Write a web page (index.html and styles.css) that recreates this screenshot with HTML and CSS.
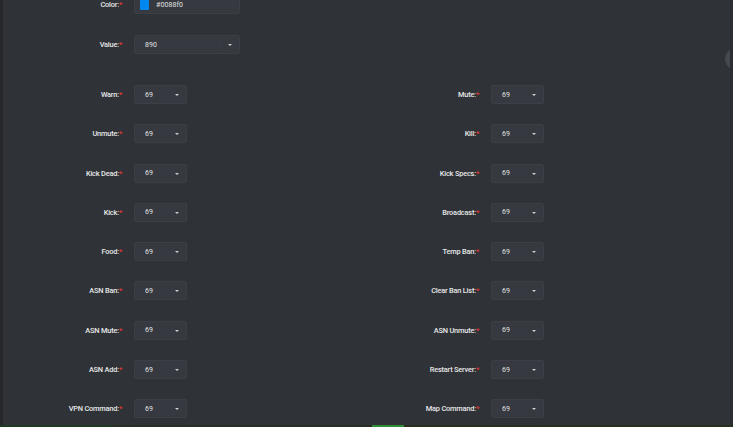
FILE: index.html
```html
<!DOCTYPE html>
<html>
<head>
<meta charset="utf-8">
<link rel="stylesheet" href="styles.css">
</head>
<body>
<div class="page">
  <div class="edge"></div>
  <div class="main">
    <div class="form">
      <div class="row row-color">
        <label class="label">Color:<span class="req">*</span></label>
        <div class="field wide"><span class="swatch"></span><span class="val">#0088f0</span></div>
      </div>
      <div class="row row-value">
        <label class="label">Value:<span class="req">*</span></label>
        <div class="field wide select"><span class="val">890</span><span class="sep"></span><span class="caret"></span></div>
      </div>
      <div class="grid">
        <div class="row"><label class="label">Warn:<span class="req">*</span></label><div class="field select"><span class="val">69</span><span class="caret"></span></div></div>
        <div class="row"><label class="label">Mute:<span class="req">*</span></label><div class="field select"><span class="val">69</span><span class="caret"></span></div></div>
        <div class="row"><label class="label">Unmute:<span class="req">*</span></label><div class="field select"><span class="val">69</span><span class="caret"></span></div></div>
        <div class="row"><label class="label">Kill:<span class="req">*</span></label><div class="field select"><span class="val">69</span><span class="caret"></span></div></div>
        <div class="row"><label class="label">Kick Dead:<span class="req">*</span></label><div class="field select"><span class="val">69</span><span class="caret"></span></div></div>
        <div class="row"><label class="label">Kick Specs:<span class="req">*</span></label><div class="field select"><span class="val">69</span><span class="caret"></span></div></div>
        <div class="row"><label class="label">Kick:<span class="req">*</span></label><div class="field select"><span class="val">69</span><span class="caret"></span></div></div>
        <div class="row"><label class="label">Broadcast:<span class="req">*</span></label><div class="field select"><span class="val">69</span><span class="caret"></span></div></div>
        <div class="row"><label class="label">Food:<span class="req">*</span></label><div class="field select"><span class="val">69</span><span class="caret"></span></div></div>
        <div class="row"><label class="label">Temp Ban:<span class="req">*</span></label><div class="field select"><span class="val">69</span><span class="caret"></span></div></div>
        <div class="row"><label class="label">ASN Ban:<span class="req">*</span></label><div class="field select"><span class="val">69</span><span class="caret"></span></div></div>
        <div class="row"><label class="label">Clear Ban List:<span class="req">*</span></label><div class="field select"><span class="val">69</span><span class="caret"></span></div></div>
        <div class="row"><label class="label">ASN Mute:<span class="req">*</span></label><div class="field select"><span class="val">69</span><span class="caret"></span></div></div>
        <div class="row"><label class="label">ASN Unmute:<span class="req">*</span></label><div class="field select"><span class="val">69</span><span class="caret"></span></div></div>
        <div class="row"><label class="label">ASN Add:<span class="req">*</span></label><div class="field select"><span class="val">69</span><span class="caret"></span></div></div>
        <div class="row"><label class="label">Restart Server:<span class="req">*</span></label><div class="field select"><span class="val">69</span><span class="caret"></span></div></div>
        <div class="row"><label class="label">VPN Command:<span class="req">*</span></label><div class="field select"><span class="val">69</span><span class="caret"></span></div></div>
        <div class="row"><label class="label">Map Command:<span class="req">*</span></label><div class="field select"><span class="val">69</span><span class="caret"></span></div></div>
      </div>
    </div>
    <div class="scroll-btn"><span></span></div>
  </div>
  <div class="edge-r"></div>
</div>
<div class="taskbar"><span class="tb-a"></span><span class="tb-b"></span><span class="tb-c"></span><span class="tb-d"></span></div>
</body>
</html>
```
FILE: styles.css
```css
html, body {
  margin: 0;
  padding: 0;
  width: 733px;
  height: 427px;
  overflow: hidden;
  background: #2f3237;
  font-family: Roboto, "Liberation Sans", Arial, sans-serif;
}
.page {
  display: flex;
  height: 425px;
}
.edge {
  width: 3px;
  background: #26282c;
  flex: none;
}
.edge-r {
  width: 3px;
  background: #2a2d31;
  flex: none;
}
.main {
  flex: 1;
  position: relative;
  overflow: hidden;
}
.form {
  margin-top: -5px;
}
.row {
  display: flex;
  align-items: center;
  height: 19px;
}
.row-value {
  margin-top: 21px;
}
.label {
  width: 119px;
  margin-right: 12px;
  text-align: right;
  color: #e8e8e8;
  font-size: 7.4px;
  font-weight: 500;
  letter-spacing: -0.2px;
  white-space: nowrap;
}
.req {
  color: #e53935;
}
.field {
  position: relative;
  box-sizing: border-box;
  height: 19px;
  width: 53px;
  background: #363a40;
  border: 1px solid #3c4046;
  border-radius: 2px;
  display: flex;
  align-items: center;
  padding-left: 10px;
}
.field.wide {
  width: 106px;
  padding-left: 5px;
}
.row-value .field.wide {
  padding-left: 10px;
}
.val {
  color: #e0e0e0;
  font-size: 7px;
  letter-spacing: 0.1px;
}
.swatch {
  width: 9px;
  height: 10px;
  background: #0088f0;
  border-radius: 1px;
  margin-right: 7px;
}
.caret {
  position: absolute;
  right: 7px;
  top: 8px;
  width: 0;
  height: 0;
  border-left: 2.5px solid transparent;
  border-right: 2.5px solid transparent;
  border-top: 2.5px solid #d0d0d0;
}
.sep {
  position: absolute;
  right: 18px;
  top: 4px;
  width: 1px;
  height: 10px;
  background: #393d43;
}
.grid {
  display: grid;
  grid-template-columns: 357px 357px;
  row-gap: 20.3px;
  margin-top: 31px;
}
.scroll-btn {
  position: absolute;
  left: 722px;
  top: 48px;
  width: 22px;
  height: 22px;
  border-radius: 50%;
  background: #45484d;
}
.scroll-btn span {
  position: absolute;
  left: 7px;
  top: 9px;
  width: 3px;
  height: 4px;
  background: #cfcfcf;
}
.taskbar {
  display: flex;
  height: 2px;
  background: #25301f;
}
.tb-a { width: 113px; background: #1f3a20; }
.tb-b { width: 259px; background: #262f23; }
.tb-c { width: 32px; background: #2f8a34; }
.tb-d { flex: 1; background: #25301f; }
```
